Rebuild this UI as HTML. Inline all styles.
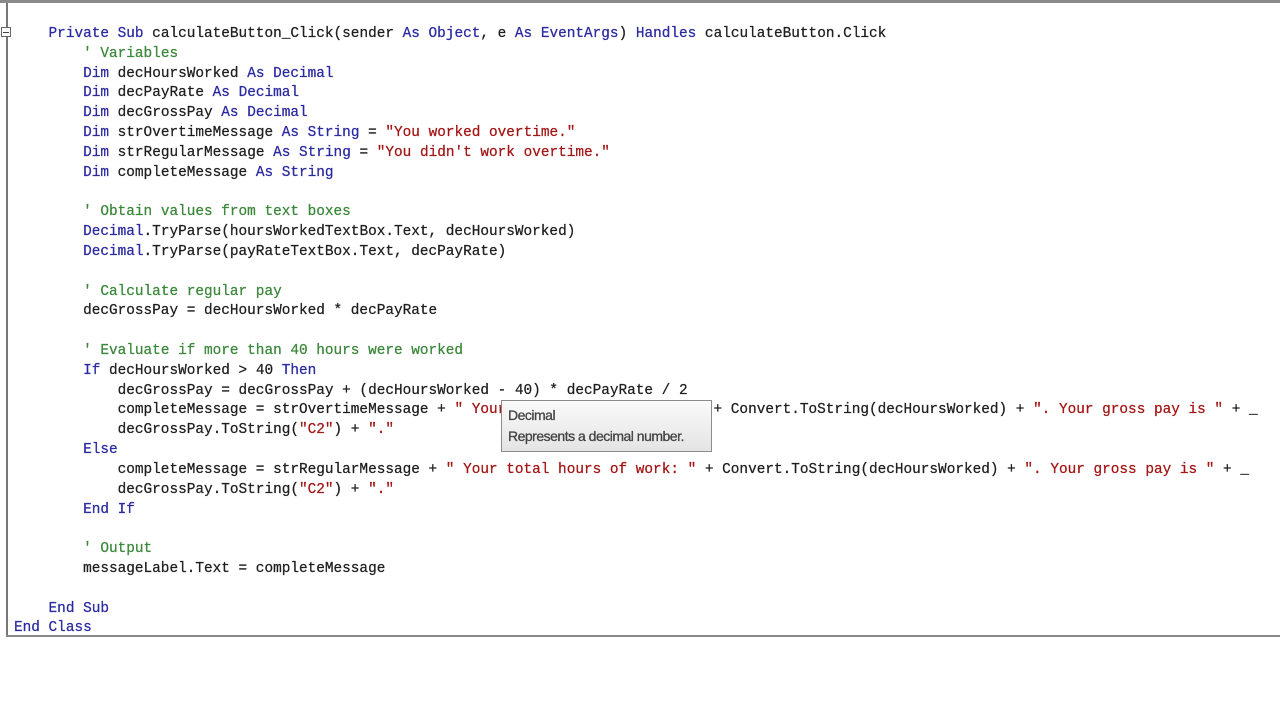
<!DOCTYPE html>
<html><head><meta charset="utf-8"><style>
html,body{margin:0;padding:0;background:#fff;width:1280px;height:720px;overflow:hidden;position:relative}
.top{position:absolute;left:0;top:0;width:1280px;height:3px;background:#8a8a8a}
.lv{position:absolute;left:6px;top:3px;width:2px;height:633px;background:#777}
.bot{position:absolute;left:6px;top:635px;width:1274px;height:2px;background:#888}
.fold{position:absolute;left:1px;top:27px;width:8px;height:8px;border:1px solid #666;background:#fff}
.fold:after{content:"";position:absolute;left:1px;top:3.5px;width:6px;height:1px;background:#444}
pre{position:absolute;left:14px;top:25px;margin:0;font-family:"Liberation Mono",monospace;font-size:14.4px;line-height:19.82px;color:#1e1e1e;letter-spacing:0;-webkit-text-stroke:0.25px}
.k{color:#2a2aa0}.c{color:#3b873b}.s{color:#a31515}
.tip{position:absolute;left:501px;top:400px;width:211px;height:52px;border:1px solid #8c8c8c;background:linear-gradient(#fafafa,#e4e4e4);font-family:"Liberation Sans",sans-serif;font-size:14px;color:#444;box-sizing:border-box;padding:4px 6px;line-height:21px;letter-spacing:-0.5px;-webkit-text-stroke:0.3px}
</style></head><body>
<div class="top"></div><div class="lv"></div><div class="bot"></div><div class="fold"></div>
<pre>    <span class="k">Private Sub</span> calculateButton_Click(sender <span class="k">As Object</span>, e <span class="k">As</span> <span class="k">EventArgs</span>) <span class="k">Handles</span> calculateButton.Click
        <span class="c">' Variables</span>
        <span class="k">Dim</span> decHoursWorked <span class="k">As Decimal</span>
        <span class="k">Dim</span> decPayRate <span class="k">As Decimal</span>
        <span class="k">Dim</span> decGrossPay <span class="k">As Decimal</span>
        <span class="k">Dim</span> strOvertimeMessage <span class="k">As String</span> = <span class="s">"You worked overtime."</span>
        <span class="k">Dim</span> strRegularMessage <span class="k">As String</span> = <span class="s">"You didn't work overtime."</span>
        <span class="k">Dim</span> completeMessage <span class="k">As String</span>

        <span class="c">' Obtain values from text boxes</span>
        <span class="k">Decimal</span>.TryParse(hoursWorkedTextBox.Text, decHoursWorked)
        <span class="k">Decimal</span>.TryParse(payRateTextBox.Text, decPayRate)

        <span class="c">' Calculate regular pay</span>
        decGrossPay = decHoursWorked * decPayRate

        <span class="c">' Evaluate if more than 40 hours were worked</span>
        <span class="k">If</span> decHoursWorked &gt; 40 <span class="k">Then</span>
            decGrossPay = decGrossPay + (decHoursWorked - 40) * decPayRate / 2
            completeMessage = strOvertimeMessage + <span class="s">" Your total hours of work: "</span> + Convert.ToString(decHoursWorked) + <span class="s">". Your gross pay is "</span> + _
            decGrossPay.ToString(<span class="s">"C2"</span>) + <span class="s">"."</span>
        <span class="k">Else</span>
            completeMessage = strRegularMessage + <span class="s">" Your total hours of work: "</span> + Convert.ToString(decHoursWorked) + <span class="s">". Your gross pay is "</span> + _
            decGrossPay.ToString(<span class="s">"C2"</span>) + <span class="s">"."</span>
        <span class="k">End If</span>

        <span class="c">' Output</span>
        messageLabel.Text = completeMessage

    <span class="k">End Sub</span>
<span class="k">End Class</span></pre>
<div class="tip">Decimal<br>Represents a decimal number.</div>
</body></html>
